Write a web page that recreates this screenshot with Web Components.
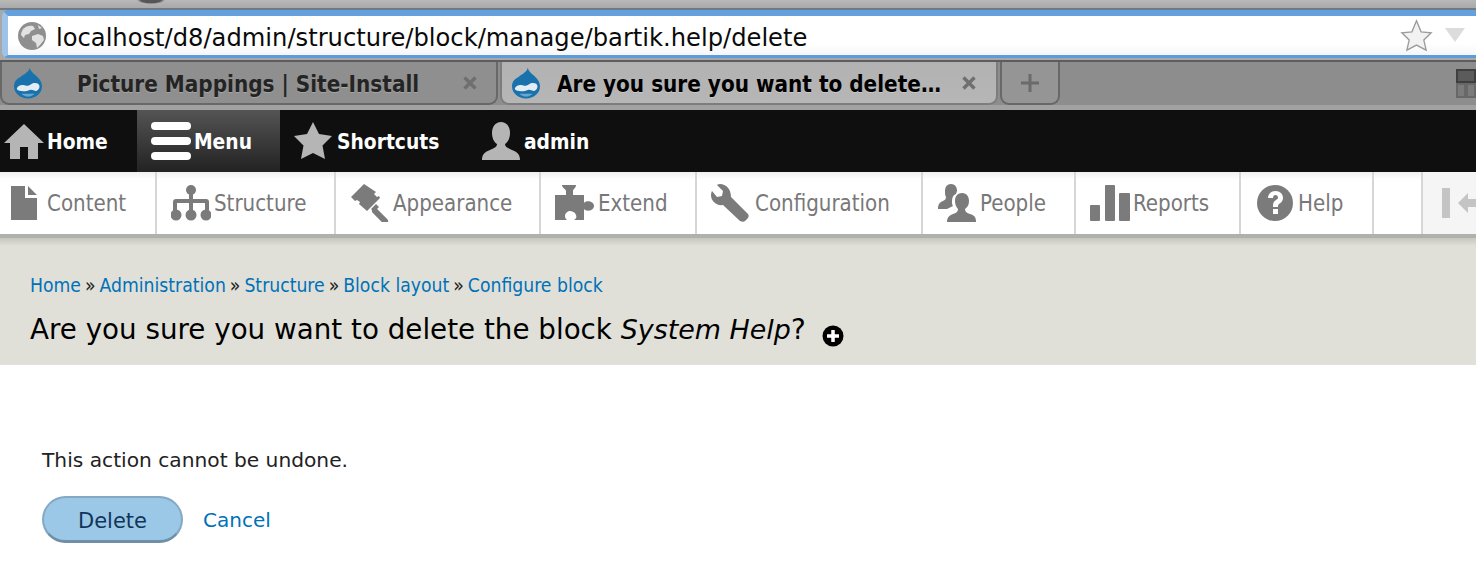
<!DOCTYPE html>
<html>
<head>
<meta charset="utf-8">
<title>Are you sure you want to delete the block System Help?</title>
<style>
html,body{margin:0;padding:0;background:#fff;overflow:hidden;}
body{width:1476px;height:586px;font-family:"DejaVu Sans","Liberation Sans",sans-serif;}
</style>
</head>
<body>
<browser-chrome></browser-chrome>
<admin-toolbar></admin-toolbar>
<admin-tray></admin-tray>
<page-head>
    <a slot="crumb" href="#">Home</a>
    <a slot="crumb" href="#">Administration</a>
    <a slot="crumb" href="#">Structure</a>
    <a slot="crumb" href="#">Block layout</a>
    <a slot="crumb" href="#">Configure block</a>
</page-head>
<confirm-form></confirm-form>

<script>
const dropIcon = /*html*/`
    <svg width="28" height="32" viewBox="0 0 30 33">
        <path d="M17 0c0 4 5 7 8 10 3 3 5 6 5 10 0 8-7 13-15 13S0 28 0 20c0-5 3-8 7-10 4-3 9-5 10-10z" fill="#1a72ad"/>
        <path d="M3 22c2-3 5-4 8-3 3 1 5 0 7-1 3-2 8-2 9 1 1 3-1 5-3 6-3 0-5-2-7-1-3 1-6 2-9 1-3 0-5-1-5-3z" fill="#e4edf3"/>
        <path d="M8 28h14c-2 2-4 3-7 3s-5-1-7-3z" fill="#6aa7d0"/>
    </svg>`;

const closeIcon = /*html*/`
    <svg width="16" height="16" viewBox="0 0 16 16"><path d="M2.500 2.500l11 11M13.500 2.500l-11 11" stroke="#6f6f6f" stroke-width="3.400"/></svg>`;

const tplChrome = document.createElement('template');
tplChrome.innerHTML = /*html*/`
    <style>
        :host{display:block;height:110px;background:#b2b2b2;}
        .top{height:8px;background:radial-gradient(ellipse 14px 4px at 151px 0,#555 70%,transparent 100%),linear-gradient(#b8b8b8,#a9a9a9);border-bottom:2px solid #6f7a86;}
        .urlrow{height:50px;box-sizing:border-box;padding:0 0 0 2px;background:#a8a8a8;}
        .url{height:48px;box-sizing:border-box;display:flex;align-items:center;
            border-top:6px solid #64a0dc;border-bottom:3px solid #5c9bdc;border-left:6px solid #9fc3e8;
            border-radius:6px 0 0 6px;background:linear-gradient(#fff,#fff 70%,#f6f6f6);padding-left:9px;}
        .globe{display:block;width:30px;height:30px;flex:none;}
        .addr{margin-left:9px;padding-top:4px;font-size:24.2px;color:#0a0a0a;white-space:nowrap;flex:1;}
        .star{display:block;margin-right:12px;}
        .drop{display:block;margin-right:11px;margin-top:-2px;}
        .tabs{height:50px;box-sizing:border-box;display:flex;background:#8d8d8d;border-top:2px solid #5d5d5d;border-bottom:5px solid #a2a2a2;gap:2px;}
        .tab{width:498px;box-sizing:border-box;display:flex;align-items:center;padding:0 18px 0 12px;
            border:2px solid #686868;border-top:0;border-radius:0 0 9px 9px;background:#8f8f8f;
            font-family:"DejaVu Sans Condensed","DejaVu Sans",sans-serif;font-weight:bold;font-size:22.3px;color:#242424;white-space:nowrap;text-shadow:0 1px 0 #a5a5a5;}
        .tab svg{flex:none;display:block;}
        .tab .title{flex:1;margin-left:35px;padding-top:2px;}
        .tab.on{background:linear-gradient(#b2b2b2,#b6b6b6);color:#000;border-color:#7d7d7d;padding-left:10px;padding-right:19px;text-shadow:0 1px 0 #c8c8c8;}
        .tab.on .title{margin-left:17px;}
        .plus{width:60px;box-sizing:border-box;border:2px solid #686868;border-top:0;border-radius:0 0 9px 9px;
            background:#959595;display:flex;align-items:center;justify-content:center;}
        .grid{margin-left:auto;display:block;align-self:center;}
    </style>
    <div class="top"></div>
    <div class="urlrow">
        <div class="url">
            <svg class="globe" viewBox="0 0 30 30">
                <circle cx="15" cy="15" r="14" fill="#8f8f8f"/>
                <path d="M6 8c3-3 7-4 10-3l2 3-4 2-2 3-4 1-1 3-3-3c0-2 1-4 2-6zM15 15l6-2 5 2 1 4-4 5-3 3-1-5-4-3zM21 4l4 3-3 1z" fill="#e2e2e2"/>
            </svg>
            <span class="addr">localhost/d8/admin/structure/block/manage/bartik.help/delete</span>
            <svg class="star" width="33" height="33" viewBox="0 0 36 36"><path d="M18 2l5 12 11 1-8 8 2.500 11L18 28.500 7.500 34 10 23l-8-8 11-1z" fill="#f2f2f2" stroke="#9c9c9c" stroke-width="1.500"/></svg>
            <svg class="drop" width="20" height="16" viewBox="0 0 20 16"><path d="M0 1h20L10 15z" fill="#dcdcdc"/></svg>
        </div>
    </div>
    <div class="tabs">
        <div class="tab">${dropIcon}<span class="title">Picture Mappings | Site-Install</span>${closeIcon}</div>
        <div class="tab on">${dropIcon}<span class="title">Are you sure you want to delete…</span>${closeIcon}</div>
        <div class="plus"><svg width="20" height="20" viewBox="0 0 20 20"><path d="M10 1v18M1 10h18" stroke="#6b6b6b" stroke-width="3"/></svg></div>
        <svg class="grid" width="20" height="30" viewBox="0 0 20 30">
            <rect x="1" y="1" width="18" height="12" fill="#5b5b5b" stroke="#3f3f3f" stroke-width="2"/>
            <rect x="1" y="15" width="8" height="13" fill="#7b7b7b" stroke="#686868" stroke-width="2"/>
            <rect x="11" y="15" width="8" height="13" fill="#7b7b7b" stroke="#686868" stroke-width="2"/>
        </svg>
    </div>
`;

class BrowserChrome extends HTMLElement {
    constructor(){
        super();
        this.attachShadow({mode:'open'});
        this.shadowRoot.appendChild(tplChrome.content.cloneNode(true));
    }
}
customElements.define('browser-chrome', BrowserChrome);

const tplToolbar = document.createElement('template');
tplToolbar.innerHTML = /*html*/`
    <style>
        :host{display:flex;height:62px;background:#0f0f0f;}
        .item{box-sizing:border-box;display:flex;align-items:center;color:#fff;font-family:"DejaVu Sans Condensed","DejaVu Sans",sans-serif;font-weight:bold;font-size:20.8px;white-space:nowrap;}
        .item svg{display:block;flex:none;}
        .item span{padding-top:2px;}
        .home{width:137px;padding-left:4px;}
        .menu{width:143px;padding-left:14px;background:linear-gradient(#545454,#222);}
        .shortcuts{width:200px;padding-left:14px;}
        .user{padding-left:1px;}
        .user span{margin-left:3px;}
    </style>
    <div class="item home">
        <svg width="40" height="38" viewBox="0 0 40 38"><path d="M20 2L0 21h6v16h10V25h8v12h10V21h6z" fill="#b5b5b5"/></svg>
        <span style="margin-left:3px">Home</span>
    </div>
    <div class="item menu">
        <svg width="40" height="38" viewBox="0 0 40 38"><g fill="#fff"><rect y="0" width="40" height="8" rx="4"/><rect y="15" width="40" height="8" rx="4"/><rect y="30" width="40" height="8" rx="4"/></g></svg>
        <span style="margin-left:3px">Menu</span>
    </div>
    <div class="item shortcuts">
        <svg width="38" height="38" viewBox="0 0 38 38"><path d="M19 0l6 12 13 2-9.500 9.500L31 37 19 31 7 37l2.500-13.500L0 14l13-2z" fill="#b5b5b5"/></svg>
        <span style="margin-left:5px">Shortcuts</span>
    </div>
    <div class="item user">
        <svg width="40" height="38" viewBox="0 0 40 38"><path d="M20 0c6 0 9 5 9 11 0 5-2 9-5 11 0 3 3 4 7 6 5 2 8 4 8 10H1c0-6 3-8 8-10 4-2 7-3 7-6-3-2-5-6-5-11C11 5 14 0 20 0z" fill="#b5b5b5"/></svg>
        <span>admin</span>
    </div>
`;

class AdminToolbar extends HTMLElement {
    constructor(){
        super();
        this.attachShadow({mode:'open'});
        this.shadowRoot.appendChild(tplToolbar.content.cloneNode(true));
    }
}
customElements.define('admin-toolbar', AdminToolbar);

const trayIcons = {
    content:'<svg width="26" height="34" viewBox="0 0 26 34"><path d="M0 0h14v12h12v22H0zM17 0l9 9h-9z" fill="#7b7b7b"/></svg>',
    structure:'<svg width="40" height="36" viewBox="0 0 40 36"><g fill="#7b7b7b"><circle cx="20" cy="5" r="5"/><circle cx="5" cy="30" r="5.500"/><circle cx="20" cy="30" r="5.500"/><circle cx="35" cy="30" r="5.500"/><path d="M18 8h4v6h13a3 3 0 0 1 3 3v9h-4v-8H22v8h-4v-8H6v8H2v-9a3 3 0 0 1 3-3h13z"/></g></svg>',
    appearance:'<svg width="38" height="38" viewBox="0 0 38 38"><path d="M13 0L0 13l4 4 2-1 3 2-1 2 8 7 13-13-1-2-2 1-3-3 2-2zM20 25l5-5 3 3-5 5z" fill="#7b7b7b"/><path d="M24 27l10 10" stroke="#7b7b7b" stroke-width="6" stroke-linecap="round"/></svg>',
    extend:'<svg width="40" height="36" viewBox="0 0 40 36"><path d="M7 0h14c0 3-3 4-3 6v4h11v8c2-3 10-2 10 3s-8 6-10 3v11H19c2-1 3-3 2-5-1-3-4-4-6-4s-5 2-5 5c0 2 1 3 2 4H0V10h11V6c0-2-4-3-4-6z" fill="#7b7b7b"/></svg>',
    config:'<svg width="38" height="38" viewBox="0 0 38 38"><path d="M9 0c-2 0-3 1-3 1l6 6-1 5-5 1-5-6S0 9 0 11c0 6 5 11 12 10l17 16c2 1 4 1 5 0l3-3c1-2 1-3-1-5L20 13C20 5 15 0 9 0z" fill="#7b7b7b"/></svg>',
    people:'<svg width="38" height="38" viewBox="0 0 38 38"><g fill="#7b7b7b"><path d="M13 0c4 0 6 3 6 7l-1 3c-3 1-4 4-4 7 0 2 0 4 1 5l-4 2-2 1H0c0-5 2-7 5-8 2-1 3-2 3-4-1-2-1-3-1-6 0-4 2-7 6-7z"/><path d="M24 9c5 0 7 4 7 8 0 3-1 6-4 8 0 3 2 4 5 5 4 1 6 3 6 8H9c0-5 3-7 6-8 3-1 5-2 5-5-2-2-3-5-3-8 0-4 2-8 7-8z"/></g></svg>',
    reports:'<svg width="40" height="36" viewBox="0 0 40 36"><g fill="#7b7b7b"><rect x="0" y="20" width="10" height="16" rx="1"/><rect x="15" y="0" width="10" height="36" rx="1"/><rect x="29" y="8" width="11" height="28" rx="1"/></g></svg>',
    help:'<svg width="36" height="36" viewBox="0 0 36 36"><circle cx="18" cy="18" r="18" fill="#7b7b7b"/><path d="M11 13c0-4 3-7 7.500-7S26 9 26 13c0 3-2 5-4 6-1 1-1 2-1 3h-5c0-3 0-5 3-7 1-1 2-1 2-2.500S20 10 18.500 10 16 11 16 13zM16 24h5v5h-5z" fill="#fff"/></svg>'
};

const tplTrayItem = document.createElement('template');
tplTrayItem.innerHTML = /*html*/`
    <style>
        :host{display:flex;flex:none;box-sizing:border-box;align-items:center;height:100%;border-right:2px solid #d6d6d6;
            font-family:"DejaVu Sans Condensed","DejaVu Sans",sans-serif;font-size:22.1px;color:#787878;white-space:nowrap;}
        ::slotted(svg){display:block;flex:none;}
        .label{margin-left:var(--gap,3px);}
    </style>
    <slot name="icon"></slot><span class="label"><slot></slot></span>
`;

class TrayItem extends HTMLElement {
    constructor(){
        super();
        this.attachShadow({mode:'open'});
        this.shadowRoot.appendChild(tplTrayItem.content.cloneNode(true));
    }
    connectedCallback(){
        this.style.width = this.getAttribute('w') + 'px';
        this.style.paddingLeft = this.getAttribute('pad') + 'px';
        this.style.setProperty('--gap', (this.getAttribute('gap') || 3) + 'px');
    }
}
customElements.define('tray-item', TrayItem);

const tplTray = document.createElement('template');
tplTray.innerHTML = /*html*/`
    <style>
        :host{display:block;height:66px;box-sizing:border-box;background:linear-gradient(#f0f0f0,#fff 8px);border-bottom:4px solid #b1b1ab;overflow:hidden;}
        .row{display:flex;height:100%;}
        .spacer{width:49px;flex:none;box-sizing:border-box;border-right:2px solid #d6d6d6;}
        .toggle{flex:1;min-width:0;overflow:hidden;background:#f5f5f5;display:flex;align-items:center;padding-left:19px;}
        .toggle svg{display:block;flex:none;}
    </style>
    <div class="row" id="row">
        <div class="spacer"></div>
        <div class="toggle">
            <svg width="38" height="30" viewBox="0 0 38 30"><g fill="#c4c4c4"><rect x="0" y="0" width="8" height="30"/><path d="M16 15l10-10v6h12v8H26v6z"/></g></svg>
        </div>
    </div>
`;

class AdminTray extends HTMLElement {
    constructor(){
        super();
        this.attachShadow({mode:'open'});
        this.shadowRoot.appendChild(tplTray.content.cloneNode(true));
        const items = [
            ['content','Content',157,11,10],
            ['structure','Structure',179,14,3],
            ['appearance','Appearance',205,15,4],
            ['extend','Extend',156,14,3],
            ['config','Configuration',226,14,6],
            ['people','People',153,15,4],
            ['reports','Reports',165,14,3],
            ['help','Help',133,16,5],
        ];
        const row = this.shadowRoot.getElementById('row');
        const spacer = row.firstElementChild;
        items.forEach(([icon,label,w,pad,gap]) => {
            const el = document.createElement('tray-item');
            el.setAttribute('w', w);
            el.setAttribute('pad', pad);
            el.setAttribute('gap', gap);
            el.innerHTML = trayIcons[icon].replace('<svg','<svg slot="icon"') + label;
            row.insertBefore(el, spacer);
        });
    }
}
customElements.define('admin-tray', AdminTray);

const tplHead = document.createElement('template');
tplHead.innerHTML = /*html*/`
    <style>
        :host{display:block;height:127px;box-sizing:border-box;padding:36px 0 0 30px;
            background:linear-gradient(#c6c6c0,#e0e0d8 8px);}
        nav{font-family:"DejaVu Sans Condensed","DejaVu Sans",sans-serif;font-size:19.2px;line-height:24px;color:#222;white-space:nowrap;height:24px;}
        ::slotted(a){color:#0071b8;text-decoration:none;}
        .sep{margin:0 4px;}
        h1{margin:14px 0 0;font-size:27.75px;font-weight:normal;line-height:36px;color:#000;white-space:nowrap;display:flex;align-items:center;}
        em{font-style:oblique;font-size:26.9px;}
        svg{display:block;margin:12px 0 0 16px;flex:none;}
    </style>
    <nav id="nav"></nav>
    <h1><span>Are you sure you want to delete the block <em>System Help</em>?</span>
        <svg width="22" height="22" viewBox="0 0 22 22"><circle cx="11" cy="11" r="10.500" fill="#000"/><path d="M11 5v12M5 11h12" stroke="#fff" stroke-width="3.500"/></svg>
    </h1>
`;

class PageHead extends HTMLElement {
    constructor(){
        super();
        this.attachShadow({mode:'open'});
        this.shadowRoot.appendChild(tplHead.content.cloneNode(true));
        const nav = this.shadowRoot.getElementById('nav');
        for (let i = 0; i < 5; i++){
            const s = document.createElement('slot');
            s.name = 'crumb' + i;
            nav.appendChild(s);
            if (i < 4){
                const sep = document.createElement('span');
                sep.className = 'sep';
                sep.textContent = '»';
                nav.appendChild(sep);
            }
        }
    }
    connectedCallback(){
        this._number();
        // the parser may not have reached the children yet
        document.addEventListener('DOMContentLoaded', () => this._number());
    }
    _number(){
        [...this.children].forEach((a,i) => a.slot = 'crumb' + i);
    }
}
customElements.define('page-head', PageHead);

const tplForm = document.createElement('template');
tplForm.innerHTML = /*html*/`
    <style>
        :host{display:block;padding:83px 0 0 42px;font-size:20.2px;color:#222;}
        p{margin:0;line-height:24px;white-space:nowrap;}
        .actions{display:flex;align-items:center;margin-top:24px;}
        .btn{width:141px;height:47px;box-sizing:border-box;border:2px solid #84a9c4;border-bottom:3px solid #6f8fa6;border-radius:24px;
            background:#9bc8e7;color:#12355a;font:inherit;font-size:21px;padding:3px 0 0;}
        a{margin-left:20px;color:#0071b8;text-decoration:none;font-size:20px;}
    </style>
    <p>This action cannot be undone.</p>
    <div class="actions">
        <button class="btn" type="button">Delete</button>
        <a href="#">Cancel</a>
    </div>
`;

class ConfirmForm extends HTMLElement {
    constructor(){
        super();
        this.attachShadow({mode:'open'});
        this.shadowRoot.appendChild(tplForm.content.cloneNode(true));
    }
}
customElements.define('confirm-form', ConfirmForm);
</script>
</body>
</html>
